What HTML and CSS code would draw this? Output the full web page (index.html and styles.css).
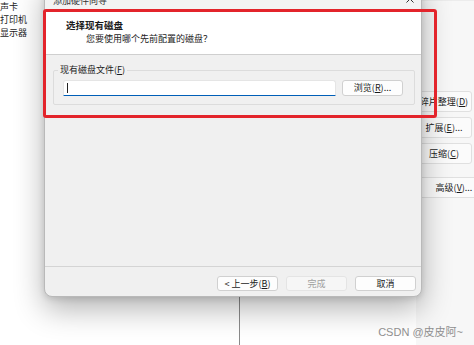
FILE: index.html
```html
<!DOCTYPE html>
<html lang="zh-CN">
<head>
    <meta charset="UTF-8">
    <meta name="viewport" content="width=device-width, initial-scale=1.0">
    <title>添加硬件向导</title>
    <link rel="stylesheet" href="styles.css">
</head>
<body>
    <div class="window">
        <div class="hw-list">
            <div class="hw-item">声卡</div>
            <div class="hw-item">打印机</div>
            <div class="hw-item">显示器</div>
        </div>
        <div class="details">
            <div class="tools">
                <div class="tool">碎片整理(<u>D</u>)</div>
                <div class="tool">扩展(<u>E</u>)...</div>
                <div class="tool">压缩(<u>C</u>)</div>
                <div class="tool tool-wide">高级(<u>V</u>)...</div>
            </div>
        </div>
    </div>

    <div class="dialog">
        <div class="titlebar">
            <span class="title">添加硬件向导</span>
            <svg class="close" width="8" height="8" viewBox="0 0 8 8">
                <path d="M0.5 0.5 L7.5 7.5 M7.5 0.5 L0.5 7.5" stroke="#333" stroke-width="1" fill="none"/>
            </svg>
        </div>
        <div class="header">
            <h1>选择现有磁盘</h1>
            <p>您要使用哪个先前配置的磁盘？</p>
        </div>
        <div class="content">
            <fieldset>
                <legend>现有磁盘文件(<u>F</u>)</legend>
                <div class="file-row">
                    <div class="path"><span class="caret"></span></div>
                    <button class="btn">浏览(<u>R</u>)...</button>
                </div>
            </fieldset>
        </div>
        <div class="footer">
            <button class="btn">&lt; 上一步(<u>B</u>)</button>
            <button class="btn disabled">完成</button>
            <button class="btn">取消</button>
        </div>
    </div>

    <div class="highlight"></div>
    <div class="watermark">CSDN @皮皮阿~</div>
</body>
</html>
```

FILE: styles.css
```css
* {
    box-sizing: border-box;
}

body {
    margin: 0;
    width: 474px;
    height: 345px;
    overflow: hidden;
    position: relative;
    background: #fff;
    font-family: "Noto Sans CJK SC", "Liberation Sans", sans-serif;
    font-size: 9px;
    color: #1b1b1b;
}

u {
    text-decoration-thickness: 1px;
}

/* window behind the wizard */
.window {
    display: flex;
    height: 100%;
}

.hw-list {
    width: 240px;
    border-right: 1px solid #8a8a8a;
}

.hw-item {
    line-height: 13px;
    white-space: nowrap;
}

.details {
    flex: 1;
    display: flex;
    justify-content: flex-end;
}

.tools {
    width: 58px;
    padding-top: 90px;
    display: flex;
    flex-direction: column;
    align-items: flex-start;
    background: #f7f7f7;
    border-top: 1px solid #ececec;
}

.tool {
    width: 56px;
    height: 21px;
    line-height: 19px;
    margin-bottom: 5px;
    border: 1px solid #e0e0e0;
    border-radius: 3px;
    background: #fbfbfb;
    text-align: center;
    white-space: nowrap;
}

.tool-wide {
    width: 76px;
    margin-top: 8px;
}

/* wizard dialog */
.dialog {
    position: absolute;
    left: 44px;
    top: -20px;
    width: 378px;
    display: flex;
    flex-direction: column;
    background: #f0f0f0;
    border: 1px solid #b9b9b9;
    border-radius: 8px;
    box-shadow: 0 12px 30px rgba(0, 0, 0, 0.3), 0 2px 6px rgba(0, 0, 0, 0.12);
    overflow: hidden;
}

.titlebar {
    height: 29px;
    display: flex;
    justify-content: space-between;
    align-items: flex-start;
    padding: 13px 7px 0 8px;
    background: #f3f3f3;
}

.title {
    line-height: 14px;
    color: #333;
}

.close {
    margin-top: 1px;
}

.header {
    height: 45px;
    padding: 9px 0 0 21px;
    background: #fff;
    border-bottom: 1px solid #cfcfcf;
}

.header h1 {
    margin: 0;
    font-size: 9.5px;
    font-weight: bold;
    line-height: 13px;
}

.header p {
    margin: 0;
    padding-left: 20px;
    line-height: 13px;
}

.content {
    height: 212px;
    padding: 9px 6px 0 8px;
    border-bottom: 1px solid #d4d4d4;
}

fieldset {
    margin: 0;
    min-width: 0;
    border: 1px solid #dcdcdc;
    border-radius: 2px;
    padding: 4px 11px 8px 9px;
}

legend {
    padding: 0 2px;
    margin-left: -5px;
    line-height: 12px;
}

.file-row {
    display: flex;
    align-items: center;
    gap: 6px;
}

.path {
    width: 273px;
    height: 16px;
    display: flex;
    align-items: center;
    padding-left: 3px;
    background: #fff;
    border: 1px solid #e5e5e5;
    border-bottom: 1px solid #005fb8;
    border-radius: 3px 3px 0 0;
}

.caret {
    width: 1px;
    height: 10px;
    background: #222;
}

.btn {
    width: 61px;
    height: 16px;
    padding: 0;
    font: inherit;
    line-height: 14px;
    color: inherit;
    text-align: center;
    background: #fdfdfd;
    border: 1px solid #d0d0d0;
    border-radius: 3px;
}

.btn.disabled {
    color: #a0a0a0;
    background: #f6f6f6;
    border-color: #e4e4e4;
}

.footer {
    height: 29px;
    display: flex;
    justify-content: flex-end;
    gap: 8px;
    padding: 9px 5px 0 0;
}

.footer .btn {
    height: 15px;
    line-height: 13px;
}

/* overlays */
.highlight {
    position: absolute;
    left: 43px;
    top: 9px;
    width: 394px;
    height: 109px;
    border: 3px solid #e3242b;
    border-radius: 3px;
}

.watermark {
    position: absolute;
    right: 11px;
    bottom: 6px;
    line-height: 14px;
    font-family: "Liberation Sans", "Noto Sans CJK SC", sans-serif;
    font-size: 11px;
    color: #8f8f8f;
}
```
